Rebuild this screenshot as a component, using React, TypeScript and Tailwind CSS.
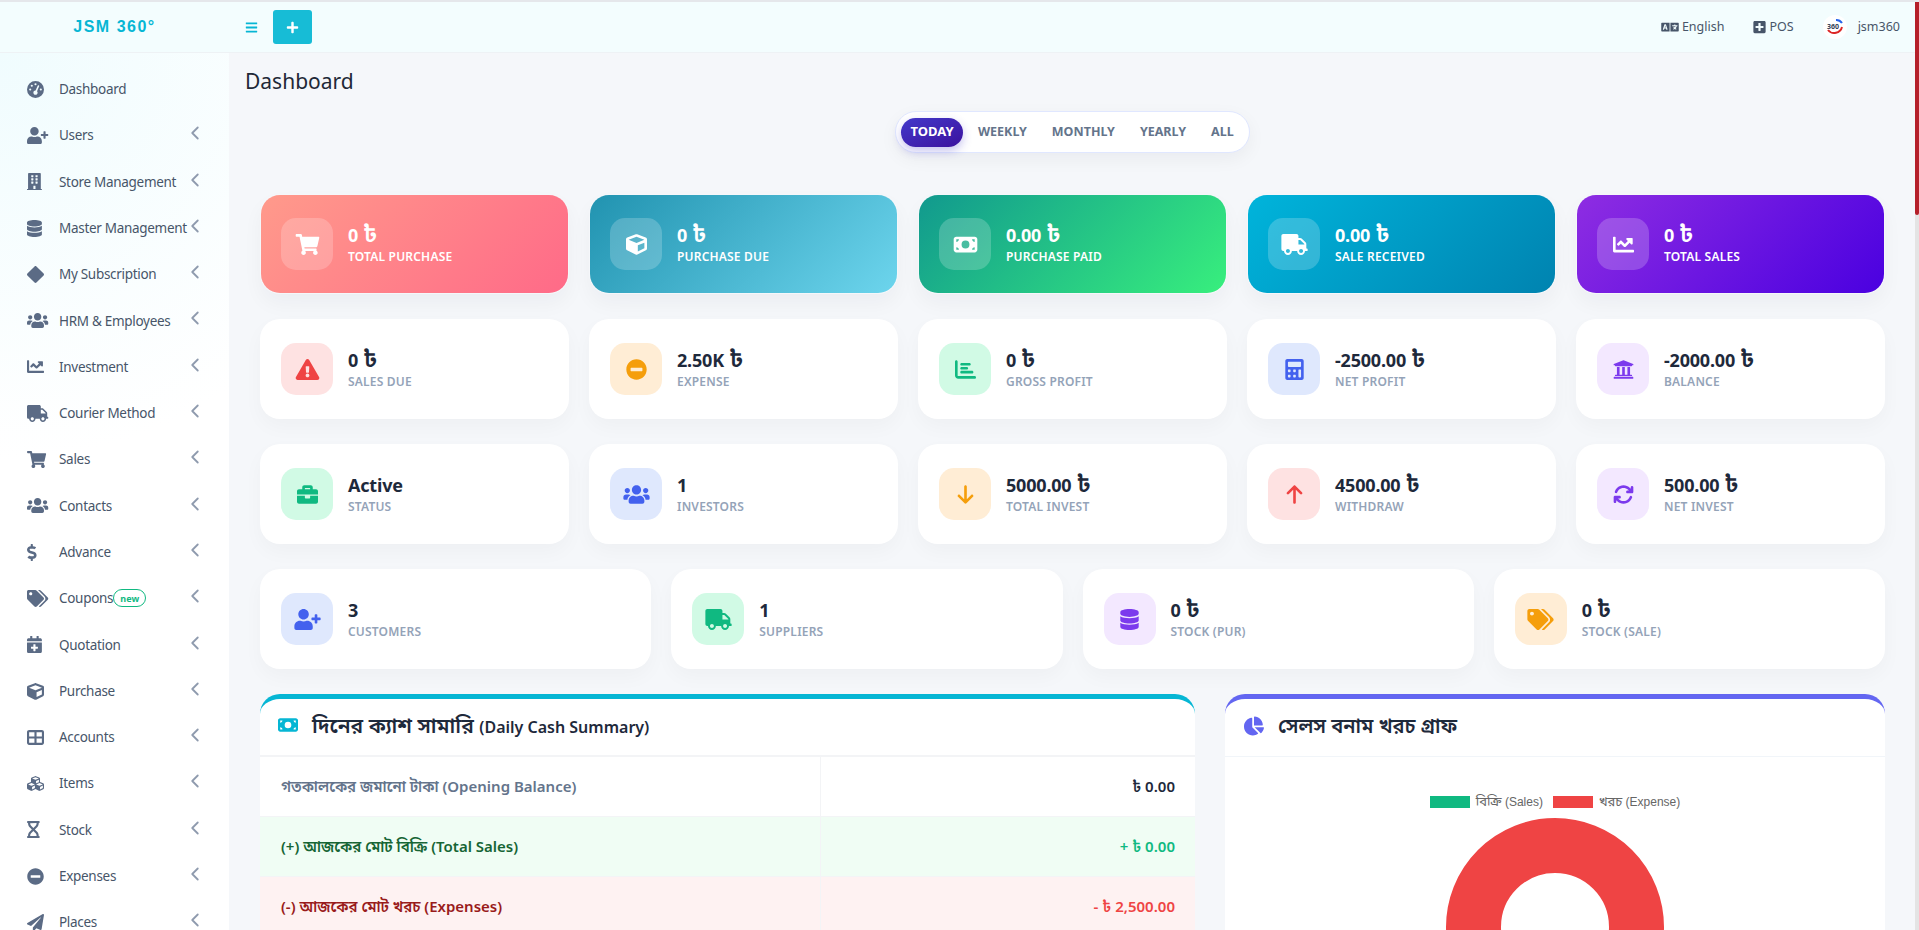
import React from "react";
import { FaUserPlus, FaBuilding, FaDatabase, FaUsers, FaChartLine, FaTruck, FaShoppingCart, FaDollarSign, FaTags, FaCalendarPlus, FaCube, FaCubes, FaMinusCircle, FaPaperPlane, FaBars, FaPlus, FaLanguage, FaPlusSquare, FaExclamationTriangle, FaCalculator, FaUniversity, FaBriefcase, FaChartPie } from "react-icons/fa";
import { FaDiamond, FaTableCellsLarge, FaHourglass, FaMoneyBill, FaGaugeHigh, FaArrowDown, FaArrowUp, FaArrowsRotate, FaChartBar } from "react-icons/fa6";
import { ChevronLeft } from "lucide-react";

const F = "font-['Noto_Sans','Noto_Sans_Bengali','Hind_Siliguri','DejaVu_Sans',sans-serif]";

const menu: [any, string, boolean?][] = [
  [FaGaugeHigh, "Dashboard", false],
  [FaUserPlus, "Users"],
  [FaBuilding, "Store Management"],
  [FaDatabase, "Master Management"],
  [FaDiamond, "My Subscription"],
  [FaUsers, "HRM & Employees"],
  [FaChartLine, "Investment"],
  [FaTruck, "Courier Method"],
  [FaShoppingCart, "Sales"],
  [FaUsers, "Contacts"],
  [FaDollarSign, "Advance"],
  [FaTags, "Coupons"],
  [FaCalendarPlus, "Quotation"],
  [FaCube, "Purchase"],
  [FaTableCellsLarge, "Accounts"],
  [FaCubes, "Items"],
  [FaHourglass, "Stock"],
  [FaMinusCircle, "Expenses"],
  [FaPaperPlane, "Places"],
];

function Val({ v }: { v: string }) {
  const has = v.endsWith("৳");
  return (
    <div className="text-[18px] font-bold leading-[26px] tracking-[-0.2px] flex items-center h-[26px]">
      <span>{has ? v.slice(0, -2) : v}</span>
      {has && <span className="text-[24px] font-semibold leading-none ml-[5px] -mt-[3px]">৳</span>}
    </div>
  );
}

function Grad({ g, I, v, l }: any) {
  return (
    <div className={`h-[100px] rounded-[20px] border border-transparent bg-clip-padding ${g} flex items-center gap-[15px] px-[20px] shadow-[0_10px_20px_rgba(15,23,42,0.04)]`}>
      <div className="w-[52px] h-[52px] rounded-[15px] bg-white/20 flex items-center justify-center text-white shrink-0 [&_svg]:h-[21px] [&_svg]:w-[27px]"><I /></div>
      <div className="text-white -mt-[2px]">
        <Val v={v} />
        <div className="text-[12px] font-semibold tracking-[0.2px] leading-[16px] uppercase mt-[1px]">{l}</div>
      </div>
    </div>
  );
}

function Stat({ b, c, I, v, l }: any) {
  return (
    <div className="h-[100px] rounded-[20px] bg-white flex items-center gap-[15px] pl-[21px] shadow-[0_8px_20px_rgba(15,23,42,0.03)]">
      <div className={`w-[52px] h-[52px] rounded-[15px] ${b} ${c} flex items-center justify-center shrink-0 [&_svg]:h-[21px] [&_svg]:w-[27px]`}><I /></div>
      <div className="-mt-[2px] text-[#1e293b]">
        <Val v={v} />
        <div className="text-[12px] font-semibold tracking-[0.2px] leading-[16px] uppercase text-[#94a3b8] mt-[1px]">{l}</div>
      </div>
    </div>
  );
}

const BLUE = "bg-[#dfe8fd]";
const BLUEI = "text-[#4361ee]";

export default function App() {
  return (
    <div className={`${F} w-[1919px] h-[930px] overflow-hidden flex flex-col bg-[#f5f7fa] relative`}>
      <div className="h-[2px] bg-[#e5e7eb] shrink-0" />
      <header className="h-[51px] shrink-0 flex items-center bg-[#f3fdfe] border-b border-[#eef2f5]">
        <div className="w-[229px] h-full flex items-center justify-center font-['Liberation_Sans',sans-serif] font-bold text-[16px] tracking-[1.5px] text-[#06b6d4]">JSM 360°</div>
        <FaBars className="ml-[16px] text-[#06b6d4] text-[13px]" />
        <button className="ml-[15px] w-[39px] h-[34px] rounded-[3px] bg-[#17bcd6] flex items-center justify-center text-white text-[13px]"><FaPlus /></button>
        <div className="ml-auto flex items-center text-[12.5px] text-[#475569] pr-[19px]">
          <FaLanguage className="h-[14px] w-[18px] text-[#475569] mr-[3px]" /><span>English</span>
          <FaPlusSquare className="ml-[29px] h-[14px] w-[13px] text-[#475569] mr-[3px]" /><span>POS</span>
          <div className="ml-[29px] w-[24px] h-[24px] rounded-full bg-white flex items-center justify-center">
            <svg width="20" height="20" viewBox="0 0 20 20"><path d="M3 13 A8 8 0 0 0 17 10" fill="none" stroke="#dc2626" strokeWidth="2"/><path d="M11 3 A7 7 0 0 1 17 6" fill="none" stroke="#2563eb" strokeWidth="2"/><text x="2" y="12" fontSize="7" fontWeight="700" fill="#334155">360</text></svg>
          </div>
          <span className="ml-[11px]">jsm360</span>
        </div>
      </header>
      <div className="flex flex-1 min-h-0">
        <aside className="w-[229px] shrink-0 bg-[radial-gradient(circle_at_0%_0%,#f0fcfe_0%,#ffffff_45%)] pt-[13px] overflow-hidden">
          {menu.map(([I, t, ch], i) => (
            <div key={i} className="h-[46.3px] flex items-center pl-[27px] text-[13.5px] tracking-[-0.3px] text-[#475569] relative">
              <span className="w-[32px] shrink-0 text-[#5b6b85] [&_svg]:h-[17px] [&_svg]:w-[22px]"><I preserveAspectRatio="xMinYMid meet" /></span>
              <span>{t}</span>
              {t === "Coupons" && <span className="w-[33px] h-[18px] rounded-full border border-[#10b981] text-[#10b981] text-[9px] font-bold flex items-center justify-center tracking-normal">new</span>}
              {ch !== false && <ChevronLeft size={22} strokeWidth={2} className="absolute left-[184px] top-[10px] text-[#8f9bae]" />}
            </div>
          ))}
        </aside>
        <main className="flex-1 min-w-0 pl-[31px] pr-[30px] relative">
          <h1 className="text-[21px] -ml-[15px] mt-[13px] leading-[30px] text-[#1f2937]">Dashboard</h1>
          <div className="flex justify-center mt-[15px]">
            <div className="h-[42px] w-[355px] rounded-full bg-white border border-[#e0e7ff] shadow-[0_6px_18px_rgba(15,23,42,0.05)] flex items-center pl-[5px] text-[12.5px] font-bold text-[#64748b] gap-[25px]">
              <span className="h-[29px] w-[62px] -mr-[10px] rounded-full bg-gradient-to-br from-[#4338ca] to-[#3b0f9e] text-white text-[13px] flex items-center justify-center shadow-[0_4px_10px_rgba(67,56,202,0.3)]">TODAY</span>
              <span>WEEKLY</span>
              <span>MONTHLY</span>
              <span>YEARLY</span>
              <span>ALL</span>
            </div>
          </div>
          <div className="grid grid-cols-5 gap-x-[20px] gap-y-[25px] mt-[41px]">
            <Grad g="bg-[linear-gradient(135deg,#ff9a8b,#ff6a88)]" I={FaShoppingCart} v="0 ৳" l="Total Purchase" />
            <Grad g="bg-[linear-gradient(135deg,#2193b0,#6dd5ed)]" I={FaCube} v="0 ৳" l="Purchase Due" />
            <Grad g="bg-[linear-gradient(135deg,#11998e,#38ef7d)]" I={FaMoneyBill} v="0.00 ৳" l="Purchase Paid" />
            <Grad g="bg-[linear-gradient(135deg,#00b4db,#0083b0)]" I={FaTruck} v="0.00 ৳" l="Sale Received" />
            <Grad g="bg-[linear-gradient(135deg,#8e2de2,#4a00e0)]" I={FaChartLine} v="0 ৳" l="Total Sales" />
            <Stat b="bg-[#fee2e2]" c="text-[#ef4444]" I={FaExclamationTriangle} v="0 ৳" l="Sales Due" />
            <Stat b="bg-[#ffedd5]" c="text-[#f59e0b]" I={FaMinusCircle} v="2.50K ৳" l="Expense" />
            <Stat b="bg-[#d1fae5]" c="text-[#10b981]" I={FaChartBar} v="0 ৳" l="Gross Profit" />
            <Stat b={BLUE} c={BLUEI} I={FaCalculator} v="-2500.00 ৳" l="Net Profit" />
            <Stat b="bg-[#f3e8ff]" c="text-[#7c3aed]" I={FaUniversity} v="-2000.00 ৳" l="Balance" />
            <Stat b="bg-[#d1fae5]" c="text-[#10b981]" I={FaBriefcase} v="Active" l="Status" />
            <Stat b={BLUE} c={BLUEI} I={FaUsers} v="1" l="Investors" />
            <Stat b="bg-[#ffedd5]" c="text-[#f59e0b]" I={FaArrowDown} v="5000.00 ৳" l="Total Invest" />
            <Stat b="bg-[#fee2e2]" c="text-[#ef4444]" I={FaArrowUp} v="4500.00 ৳" l="Withdraw" />
            <Stat b="bg-[#f3e8ff]" c="text-[#7c3aed]" I={FaArrowsRotate} v="500.00 ৳" l="Net Invest" />
          </div>
          <div className="grid grid-cols-4 gap-x-[20px] mt-[25px]">
            <Stat b={BLUE} c={BLUEI} I={FaUserPlus} v="3" l="Customers" />
            <Stat b="bg-[#d1fae5]" c="text-[#10b981]" I={FaTruck} v="1" l="Suppliers" />
            <Stat b="bg-[#f3e8ff]" c="text-[#7c3aed]" I={FaDatabase} v="0 ৳" l="Stock (Pur)" />
            <Stat b="bg-[#ffedd5]" c="text-[#f59e0b]" I={FaTags} v="0 ৳" l="Stock (Sale)" />
          </div>
          <div className="grid grid-cols-[935px_660px] gap-x-[30px] mt-[25px] items-start">
            <section className="bg-white rounded-[20px] border-t-[5px] border-[#06b6d4] overflow-hidden h-[300px]">
              <div className="h-[58px] flex items-center pl-[18px] pb-[4px] border-b-2 border-[#f3f4f6]">
                <FaMoneyBill className="text-[#06b6d4] h-[18px] w-[20px] mr-[14px]" />
                <span className="text-[21px] font-semibold text-[#1e293b] leading-none">দিনের ক্যাশ সামারি <span className="text-[16px]">(Daily Cash Summary)</span></span>
              </div>
              {[
                ["গতকালকের জমানো টাকা (Opening Balance)", "৳ 0.00", "bg-white", "text-[#64748b]", "text-[#1e293b]"],
                ["(+) আজকের মোট বিক্রি (Total Sales)", "+ ৳ 0.00", "bg-[#f0fdf4]", "text-[#166534]", "text-[#10b981]"],
                ["(-) আজকের মোট খরচ (Expenses)", "- ৳ 2,500.00", "bg-[#fef2f2]", "text-[#991b1b]", "text-[#ef4444]"],
              ].map((r, i) => (
                <div key={i} className={`h-[60px] flex items-center text-[15px] font-semibold border-b border-[#f3f4f6] ${r[2]}`}>
                  <div className={`w-[561px] h-full flex items-center pl-[21px] border-r border-[#f3f4f6] ${r[3]}`}>{r[0]}</div>
                  <div className={`flex-1 text-right pr-[20px] ${r[4]}`}>{r[1]}</div>
                </div>
              ))}
            </section>
            <section className="bg-white rounded-[20px] border-t-[5px] border-[#6366f1] overflow-hidden h-[300px]">
              <div className="h-[58px] flex items-center pl-[19px] pb-[4px] border-b border-[#f1f5f9]">
                <FaChartPie className="text-[#6366f1] text-[20px] mr-[14px]" />
                <span className="text-[20px] font-semibold text-[#1e293b] leading-none">সেলস বনাম খরচ গ্রাফ</span>
              </div>
              <div className="relative pt-[38px] flex flex-col items-center">
                <div className="flex items-center text-[12px] font-['Liberation_Sans','Noto_Sans_Bengali',sans-serif] text-[#666666] h-[13px]">
                  <span className="w-[40px] h-[12px] bg-[#10b981] mr-[6px]" /><span><span className="text-[13px]">বিক্রি</span> (Sales)</span>
                  <span className="w-[40px] h-[12px] bg-[#ef4444] ml-[10px] mr-[6px]" /><span><span className="text-[13px]">খরচ</span> (Expense)</span>
                </div>
                <svg width="218" height="218" viewBox="0 0 218 218" className="mt-[10px]"><circle cx="109" cy="109" r="81.5" fill="none" stroke="#ef4444" strokeWidth="55" /></svg>
              </div>
            </section>
          </div>
        </main>
        <div className="w-[4px] shrink-0" />
      </div>
      <div className="absolute right-0 top-[2px] bottom-0 w-[4px] bg-[#e4e4e4]"><div className="h-[213px] rounded-b-[2px] bg-[#b5202a]" /></div>
    </div>
  );
}
